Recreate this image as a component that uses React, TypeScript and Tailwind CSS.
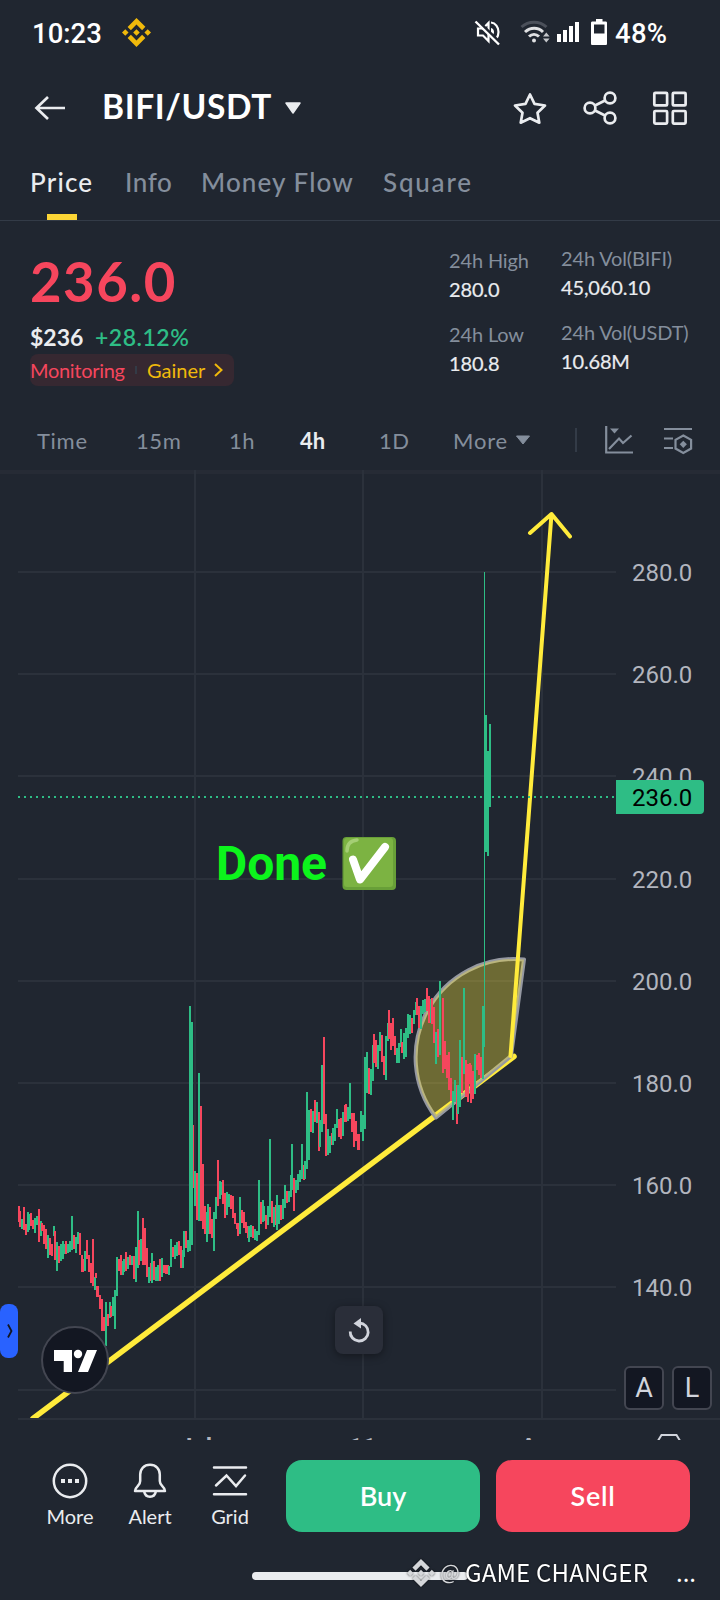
import { SiBinance } from 'react-icons/si';

const TABS = [
	{ label: 'Price', cls: 'w-[95px] tracking-[1.2px] text-[#eaecef]', active: true },
	{ label: 'Info', cls: 'w-[76px] tracking-[0.6px] text-[#848e9c]' },
	{ label: 'Money Flow', cls: 'w-[182px] tracking-[1.1px] text-[#848e9c]' },
	{ label: 'Square', cls: 'tracking-[1.8px] text-[#848e9c]' },
];

const INTERVALS = [
	{ label: 'Time', cls: 'w-[99px] tracking-[0.7px]' },
	{ label: '15m', cls: 'w-[93px] tracking-[0.6px]' },
	{ label: '1h', cls: 'w-[71px] tracking-[0.5px]' },
	{ label: '4h', cls: 'w-[79px] font-bold text-[#eaecef]' },
	{ label: '1D', cls: 'w-[74px] tracking-[0.5px]' },
	{ label: 'More', cls: 'w-[62px] tracking-[0.8px]' },
];

const STATS = [
	{
		cls: 'w-[112px] pt-[20px]',
		items: [
			{ label: '24h High', value: '280.0' },
			{ label: '24h Low', value: '180.8' },
		],
	},
	{
		cls: 'pt-[18px]',
		items: [
			{ label: '24h Vol(BIFI)', value: '45,060.10' },
			{ label: '24h Vol(USDT)', value: '10.68M' },
		],
	},
];

// candles: direction (g/r) + left edge, top, bottom, all in thirds of a pixel from the segment origin
const SEGMENTS = [
	{
		x: 0,
		y: 960,
		bars: `r54 738 786,r57 753 801,g63 777 807,r69 741 810,r75 792 825,g81 756 816,g84 762 810,r90 759 798,r96 780 807,g102 774 819,g108 768 795,r114 747 846,g120 783 828,r123 789 813,r129 795 852,r135 807 867,g141 825 894,r147 834 885,r153 852 888,g159 798 828,r162 813 900,g168 846 933,r174 858 909,g180 852 903,g186 843 897,g192 852 882,r195 843 882,g201 852 879,g207 843 876,g213 768 870,r219 825 867,g225 831 879,g231 816 852,r237 819 885,r243 885 936,r246 897 936,g252 873 933,r258 840 897,r264 885 936,r270 909 969,r276 837 978,g282 951 990,r285 939 954,r288 978 1011,r291 978 1011,r297 1005 1047,r303 1017 1113,r309 1071 1113,g315 1026 1158,r321 1062 1098,g327 1026 1074,r330 1038 1071,g336 1011 1068,g342 990 1107,g348 891 1008,r354 897 933,r360 885 945,g366 903 945,g369 897 936,r375 876 933,g381 891 927,r387 885 915,g393 888 915,r399 888 957,g405 861 966,g411 753 924,r414 840 915,g420 837 903,r426 774 915,r432 804 915,r438 864 951,g444 921 969,r450 909 963,g453 879 969,r459 903 960,g465 921 963,g471 915 963,r477 897 963,g483 894 951,r489 915 939,r495 915 942,r501 915 942,g504 918 945,g510 837 921,r516 861 891,g522 855 897,g528 846 888,r534 843 885,r540 858 924,g546 870 924,g549 813 891,r555 813 864,g561 840 876,g567 138 873,g573 186 855,r576 495 684,g573 186 855,g582 633 738,r588 639 780,g594 339 783,r600 438 783,r606 612 807,r612 738 822,g618 756 846,g621 732 822,r627 741 822,r633 777 834,g639 756 873,g645 711 777,r651 600 738,g657 663 717,g663 666 705,r666 660 732,r672 699 774,g678 696 765`,
	},
	{
		x: 200,
		y: 960,
		bars: `g84 702 741,r90 705 747,r96 708 774,r102 759 792,r108 789 807,r111 789 828,g117 711 822,r123 750 789,r129 756 804,r135 786 819,r141 798 834,g144 798 846,g150 795 831,r156 798 834,g162 807 840,g168 813 843,g174 660 825,r180 726 792,g186 720 786,g189 738 783,r195 765 807,g201 738 795,g207 537 771,r213 723 789,g219 741 801,r225 735 795,g228 705 810,g234 735 792,r240 735 780,g246 717 777,g252 675 744,r258 693 729,g264 693 726,g270 645 711,g273 552 690,r279 654 753,g285 660 699,g291 642 690,g297 630 666,g303 552 657,r309 615 660,g312 603 657,g318 396 627,g324 450 600,r330 447 516,g336 453 519,r342 420 486,g348 426 489,r354 456 573,g357 480 561,g363 315 516,r369 231 492,r375 462 588,g381 507 585,g387 528 579,r393 519 555,g396 504 555,g402 492 543,g408 447 504,r414 477 531,r420 474 537,g426 456 528,r432 435 486,r435 432 486,g441 441 483,g447 369 477,r453 459 516,r459 459 561,r465 483 543,r471 522 570,r474 522 570,g480 453 516,g486 465 543,g492 291 507,g498 276 399,r504 324 402,g510 327 405,g516 255 363,r519 222 309,r525 240 321,g531 255 327,g537 216 273,r543 225 306,r549 288 345,g555 228 360,g561 189 243,r564 150 237,r570 189 270,r576 174 258,r582 228 285,g588 264 309,g594 249 309,g600 207 261,r603 246 279,g609 219 297,g615 204 291,g621 162 234,g627 165 222,r633 174 219,g639 150 192,g645 126 165,r648 114 165,r654 138 204,g660 138 207,g666 120 162,g672 117 156`,
	},
	{
		x: 380,
		y: 900,
		bars: `r138 264 333,r144 288 369,g150 297 369,r153 294 372,r159 321 429,g165 396 492,r171 387 471,g177 243 465,r186 294 519,r192 423 507,r198 465 534,r204 456 570,r210 534 603,g216 573 660,g222 540 606,r228 555 672,g231 555 642,g237 420 621,r243 471 579,g249 264 522,r255 480 591,r261 492 606,r267 489 552,r270 495 609,r276 513 597,g282 462 582,r288 465 510,r294 459 525,r300 471 534,g306 318 537`,
	},
	{
		x: 400,
		y: 490,
		bars: `g255 675 1086,g261 783 1098,g267 702 951`,
	},
];

const candles = SEGMENTS.flatMap(s =>
	s.bars.split(',').map(b => {
		const [x, top, bottom] = b.slice(1).split(' ').map(Number);
		return { up: b[0] === 'g', x: s.x + x / 3, y: s.y + top / 3, h: (bottom - top) / 3 };
	}),
);

const PRICES = [
	{ label: '280.0', y: 572 },
	{ label: '260.0', y: 674 },
	{ label: '240.0', y: 776 },
	{ label: '220.0', y: 879 },
	{ label: '200.0', y: 981 },
	{ label: '180.0', y: 1083 },
	{ label: '160.0', y: 1185 },
	{ label: '140.0', y: 1287 },
];

function StatusBar() {
	return (
		<div className="flex h-16 items-center pl-[32px] font-[Roboto] text-[27.5px] leading-none font-medium text-white">
			<span className="w-[90px] pt-[3px]">10:23</span>
			<SiBinance className="mt-px h-[29px] w-[29px] text-[#f0b90b]" />
			<svg className="ml-[322px]" width="138" height="30" viewBox="473 17 138 30" fill="none">
				{/* muted speaker */}
				<path d="M478 28.5h5l5.500-5.500v18l-5.500-5.500h-5z" stroke="#fff" strokeWidth="2.200" />
				<path d="M491 22.500c4.500.5 7.500 4.500 7.500 9.500 0 2.500-.8 4.600-2 6.300" stroke="#fff" strokeWidth="2.200" />
				<path d="M491 28v8c2-.5 3-2.200 3-4s-1-3.500-3-4z" fill="#fff" />
				<path d="M477.500 20.500l23 22.500" stroke="#202630" strokeWidth="3" />
				<path d="M475.500 21.500l23.500 23" stroke="#fff" strokeWidth="2.400" />
				{/* wifi */}
				<path d="M521.500 27c7-6.500 18-6.500 25 0" stroke="#4b505a" strokeWidth="3" />
				<path d="M525 32c5.500-5 13-5 18 0" stroke="#e0e1e3" strokeWidth="3" />
				<path d="M529 36.500c3-2.800 7-2.800 10 0" stroke="#e0e1e3" strokeWidth="3" />
				<circle cx="534" cy="40.500" r="2" fill="#e0e1e3" />
				<path d="M543 36.500l3.300-4 3.300 4zM543 38.500l3.300 4 3.300-4z" fill="#c4c6ca" />
				{/* signal */}
				<path d="M557 34h4v8h-4zM563 30h4v12h-4zM569 26h4v16h-4zM575 22h4v20h-4z" fill="#fff" />
				{/* battery */}
				<path
					fillRule="evenodd"
					d="M596 19h6.500v2.500h3c1 0 1.500.5 1.500 1.500v20.500c0 1-.5 1.500-1.500 1.500h-13c-1 0-1.500-.5-1.500-1.500V23c0-1 .5-1.500 1.500-1.500h3.500zM594 24.500v9h10.500v-9z"
					fill="#fff"
				/>
			</svg>
			<span className="ml-[4px] pt-[3px] tracking-[0.3px]">48%</span>
		</div>
	);
}

function Header() {
	return (
		<div className="flex h-[86px] items-center pt-px pl-[34px]">
			<svg width="32" height="28" viewBox="34 94 32 28" fill="none" stroke="#eaecef" strokeWidth="2.700">
				<path d="M36.500 108H65M48 97L36.500 108 48 119" />
			</svg>
			<h1 className="ml-[36px] w-[182px] pb-[2px] text-[33.500px] leading-none font-bold tracking-[0.6px] text-white">BIFI/USDT</h1>
			<svg width="18" height="12" viewBox="0 0 18 12">
				<path d="M2 1h14L9 11z" fill="#eaecef" stroke="#eaecef" strokeWidth="1.500" strokeLinejoin="round" />
			</svg>
			<svg className="ml-[210px]" width="178" height="36" viewBox="512 90 178 36" fill="none" stroke="#eaecef" strokeWidth="2.700">
				<path
					d="M530 94.500l4.500 9.300 10.500 1.700-7.500 7.300 1.800 9.900-9.300-4.500-9.300 4.500 1.800-9.900-7.500-7.300 10.500-1.700z"
					strokeLinejoin="round"
				/>
				<circle cx="590" cy="108" r="5.400" />
				<circle cx="610" cy="98" r="5.400" />
				<circle cx="610" cy="118" r="5.400" />
				<path d="M595 105.500l10-5M595 110.500l10 5" />
				<rect x="654.300" y="92.800" width="12.800" height="12.600" rx="1" />
				<rect x="672.800" y="92.800" width="12.800" height="12.600" rx="1" />
				<rect x="654.300" y="111" width="12.800" height="12.600" rx="1" />
				<rect x="672.800" y="111" width="12.800" height="12.600" rx="1" />
			</svg>
		</div>
	);
}

function Tabs() {
	return (
		<div className="flex h-[71px] border-b border-[#333b47] pl-[30px] text-[26px] leading-none font-medium whitespace-nowrap">
			{TABS.map(t => (
				<div key={t.label} className={`flex flex-col pt-[19px] ${t.cls}`}>
					<span>{t.label}</span>
					{t.active && <span className="mt-auto ml-[17px] h-[6px] w-[30px] bg-[#fcd535]" />}
				</div>
			))}
		</div>
	);
}

function Summary() {
	return (
		<div className="flex h-[179px] pl-[30px] whitespace-nowrap">
			<div className="w-[419px] pt-[33px]">
				<div className="text-[54.500px] leading-none font-bold tracking-[1.500px] text-[#f6465d]">236.0</div>
				<div className="mt-[17px] flex text-[23px] leading-none">
					<span className="w-[65px] font-bold text-[#eaecef]">$236</span>
					<span className="font-semibold tracking-[0.5px] text-[#2ebd85]">+28.12%</span>
				</div>
				<div className="mt-[5px] flex h-8 w-[204px] items-center rounded-lg bg-[#362831] text-[20px] leading-none">
					<span className="w-[105px] tracking-[-0.3px] text-[#f6465d]">Monitoring</span>
					<span className="h-2 w-[2px] bg-[#333b47]" />
					<span className="ml-[10px] w-[67px] text-[#f0b90b]">Gainer</span>
					<svg width="9" height="14" viewBox="0 0 9 14" fill="none" stroke="#f0b90b" strokeWidth="2">
						<path d="M1 1l6.500 6L1 13" />
					</svg>
				</div>
			</div>
			{STATS.map((col, i) => (
				<div key={i} className={`text-[20px] leading-none ${col.cls}`}>
					{col.items.map(s => (
						<div key={s.label} className="mt-[9px] mb-[25px]">
							<div className="tracking-[-0.15px] text-[#848e9c]">{s.label}</div>
							<div className="mt-[9px] tracking-[-0.15px] text-[#eaecef] [-webkit-text-stroke:0.2px]">{s.value}</div>
						</div>
					))}
				</div>
			))}
		</div>
	);
}

function IntervalBar() {
	return (
		<div className="flex h-[70px] items-center pt-[12px] pl-[37px] text-[22px] leading-none text-[#848e9c]">
			{INTERVALS.map(it => (
				<span key={it.label} className={`shrink-0 ${it.cls}`}>
					{it.label}
				</span>
			))}
			<svg className="shrink-0" width="180" height="32" viewBox="515 425 180 32" fill="none" stroke="#848e9c" strokeWidth="2.200">
				<path d="M516.500 436h13l-6.500 8z" fill="#848e9c" strokeWidth="1" />
				<path d="M576 428v24" stroke="#333b47" strokeWidth="2" />
				<path d="M606.200 426v26.500H633M609 449l10-10.500 4 4.500 8.500-7.500" />
				<path d="M610 428.500h9l-4.500 5z" fill="#848e9c" stroke="none" />
				<path d="M664 429h28M664 438.500h9M664 448h9" />
				<path d="M683.300 435.500l7.800 4.400v8.600l-7.800 4.400-7.800-4.400v-8.600z" />
				<path d="M683.300 440.700l3.600 3.600-3.600 3.600-3.600-3.600z" fill="#848e9c" stroke="none" />
			</svg>
		</div>
	);
}

function Chart() {
	return (
		<div className="relative h-[970px] font-[Roboto]">
			<svg className="block" width="720" height="970" viewBox="0 470 720 970">
				<rect x="0" y="470" width="720" height="4" fill="#262b35" />
				<g fill="#2b313b">
					{PRICES.map(p => (
						<rect key={p.label} x="18" y={p.y - 1} width="598" height="2" />
					))}
					<rect x="18" y="1389" width="598" height="2" />
					<rect x="18" y="1418" width="702" height="2" />
					<rect x="194" y="470" width="2" height="948" />
					<rect x="362" y="470" width="2" height="948" />
					<rect x="541" y="470" width="2" height="948" />
				</g>

				<g fill="#b2b5be" fontSize="24">
					{PRICES.map(p => (
						<text key={p.label} x="632" y={p.y + 9}>
							{p.label}
						</text>
					))}
				</g>

				{/* trend line, angle sector, target arrow */}
				<clipPath id="pane">
					<rect x="18" y="474" width="598" height="944" />
				</clipPath>
				<path d="M33 1418.500L514 1056.500" stroke="#ffeb3b" strokeWidth="5.500" strokeLinecap="round" clipPath="url(#pane)" />
				<path d="M511 1056L524 959.500A98.500 98.500 0 0 0 436 1117.500z" fill="none" stroke="#9598a1" strokeWidth="4" strokeLinejoin="round" />
				<path d="M511 1056L524 959.500A98.500 98.500 0 0 0 436 1117.500z" fill="#ffeb3b" fillOpacity="0.35" />
				<path d="M510.500 1056L551.500 514M530 533l21.500-19L570 536.500" fill="none" stroke="#ffeb3b" strokeWidth="4" strokeLinecap="round" strokeLinejoin="round" />

				<g shapeRendering="crispEdges">
					<rect x="484" y="572" width="1" height="475" fill="#2ebd85" />
					{candles.map((c, i) => (
						<rect key={i} x={c.x} y={c.y} width="2" height={c.h} fill={c.up ? '#2ebd85' : '#f6465d'} />
					))}
				</g>

				<path d="M18 797h598" stroke="#2ebd85" strokeWidth="2" strokeDasharray="2 4" />
				<path d="M616 780h84a4 4 0 0 1 4 4v26a4 4 0 0 1-4 4h-84z" fill="#2ebd85" />
				<text x="632" y="806" fontSize="24" fill="#000">
					236.0
				</text>

				<text x="216" y="880" fontSize="48" fontWeight="700" fill="#0cf51c" textLength="111">
					Done
				</text>
				<rect x="342.500" y="837" width="53.500" height="53" rx="4" fill="#689f38" />
				<rect x="344" y="838" width="49" height="49" rx="3" fill="#7cb342" />
				<path d="M347 851q0-10 10-11" stroke="#aed581" strokeWidth="3.500" fill="none" strokeLinecap="round" opacity="0.8" />
				<path d="M353 859.500l7 20 25-32.500" stroke="#fff" strokeWidth="8" fill="none" strokeLinecap="round" strokeLinejoin="round" />

				<g fontSize="24" fill="#b2b5be" textAnchor="middle">
					<text x="195.500" y="1455" fontWeight="700">
						Jul
					</text>
					<text x="363" y="1455">11</text>
					<text x="542" y="1455" fontWeight="700">
						Aug
					</text>
				</g>
				<path d="M656 1444l5.500-9h15l5.500 9" fill="none" stroke="#d1d4dc" strokeWidth="2" />

				{/* TradingView mark */}
				<circle cx="75" cy="1360" r="33" fill="#131722" stroke="#434651" strokeWidth="2" />
				<path d="M54 1350h18v22h-8.300v-11H54zM87 1350h10l-9 22H78z" fill="#fff" />
				<circle cx="78" cy="1354" r="4.200" fill="#fff" />
			</svg>

			<div className="absolute top-[834px] left-0 flex h-[54px] w-[18px] items-center justify-center rounded-lg bg-[#2962ff] pl-[2px]">
				<svg width="6" height="14" viewBox="0 0 6 14" fill="none" stroke="#131722" strokeWidth="1.800">
					<path d="M1 .5L4.500 7 1 13.500" />
				</svg>
			</div>
			<div className="absolute top-[836px] left-[335px] flex h-12 w-12 items-center justify-center rounded-lg bg-[#2a2e39] shadow-[0_2px_8px_rgba(0,0,0,0.4)]">
				<svg width="24" height="28" viewBox="0 0 24 28" fill="none">
					<path d="M3.200 15.500A9 9 0 1 0 12.500 7" stroke="#d1d4dc" strokeWidth="2.800" />
					<path d="M6.500 7.500L14 2v10.500z" fill="#d1d4dc" />
				</svg>
			</div>
			<div className="absolute top-[896px] left-[624px] flex gap-2 text-[27px] leading-none text-[#d1d4dc]">
				<button className="h-11 w-10 rounded-md border-2 border-[#434651] bg-[#131722]">A</button>
				<button className="h-11 w-10 rounded-md border-2 border-[#434651] bg-[#131722]">L</button>
			</div>
		</div>
	);
}

function BottomBar() {
	return (
		<div className="flex h-[104px] pt-5 pl-[30px] text-[#eaecef]">
			<div className="flex text-[20px] leading-none">
				<div className="flex w-20 flex-col items-center gap-[7px] pt-[3px]">
					<svg width="36" height="36" viewBox="0 0 36 36" fill="none" stroke="#eaecef" strokeWidth="2.500">
						<circle cx="18" cy="18" r="16.200" />
						<path d="M9 16h4v4H9zM16 16h4v4h-4zM23 16h4v4h-4z" fill="#eaecef" stroke="none" />
					</svg>
					<span>More</span>
				</div>
				<div className="flex w-20 flex-col items-center gap-[7px] pt-[3px]">
					<svg width="36" height="36" viewBox="0 0 36 36" fill="none" stroke="#eaecef" strokeWidth="2.500">
						<path d="M18 1.700c-6 0-9.800 4.300-9.800 9.800v6.500c0 2-.8 3.500-2.500 5.200-1.700 1.700-2.700 3-2.700 4.800h30c0-1.800-1-3.100-2.700-4.800-1.700-1.700-2.500-3.200-2.500-5.200v-6.500c0-5.500-3.800-9.800-9.800-9.800z" strokeLinejoin="round" />
						<path d="M12.200 28.500c.5 3.200 3 5.200 5.800 5.200s5.300-2 5.800-5.200" />
					</svg>
					<span>Alert</span>
				</div>
				<div className="flex w-20 flex-col items-center gap-[7px] pt-[3px]">
					<svg width="36" height="36" viewBox="0 0 36 36" fill="none" stroke="#eaecef" strokeWidth="2.500" strokeLinecap="round">
						<path d="M2 4.500h32M2 31.300h32M4 22.500l10.500-10 9.500 10.500L33 12.500" />
					</svg>
					<span>Grid</span>
				</div>
			</div>
			<div className="ml-4 flex gap-4 text-[27px] leading-none font-semibold text-white">
				<button className="h-[72px] w-[194px] rounded-2xl bg-[#2ebd85] pb-px">Buy</button>
				<button className="h-[72px] w-[194px] rounded-2xl bg-[#f6465d] pb-px tracking-[0.7px]">Sell</button>
			</div>
		</div>
	);
}

function Footer() {
	return (
		<div className="flex h-14 items-center pb-px pl-[252px] font-['Noto_Sans_CJK_SC',sans-serif] text-[24px] leading-none whitespace-nowrap text-white">
			<div className="mt-[8px] h-2 w-[216px] rounded-full bg-[#eaecef]" />
			<SiBinance className="relative mt-[3px] -ml-[61px] h-[28px] w-[28px] text-[#d5d7da] drop-shadow-[0_0_1px_rgba(0,0,0,0.7)]" />
			<span className="relative ml-[5px] w-[25px] text-[21px] text-[#d5d7da] drop-shadow-[0_0_1px_rgba(0,0,0,0.7)]">@</span>
			<span className="relative w-[211px] tracking-[0.2px] drop-shadow-[0_0_1px_rgba(0,0,0,0.7)]">GAME CHANGER</span>
			<span>...</span>
		</div>
	);
}

export default function App() {
	return (
		<div className="h-[1600px] w-[720px] overflow-hidden bg-[#202630] font-[Lato,sans-serif]">
			<StatusBar />
			<Header />
			<Tabs />
			<Summary />
			<IntervalBar />
			<Chart />
			<BottomBar />
			<Footer />
		</div>
	);
}
